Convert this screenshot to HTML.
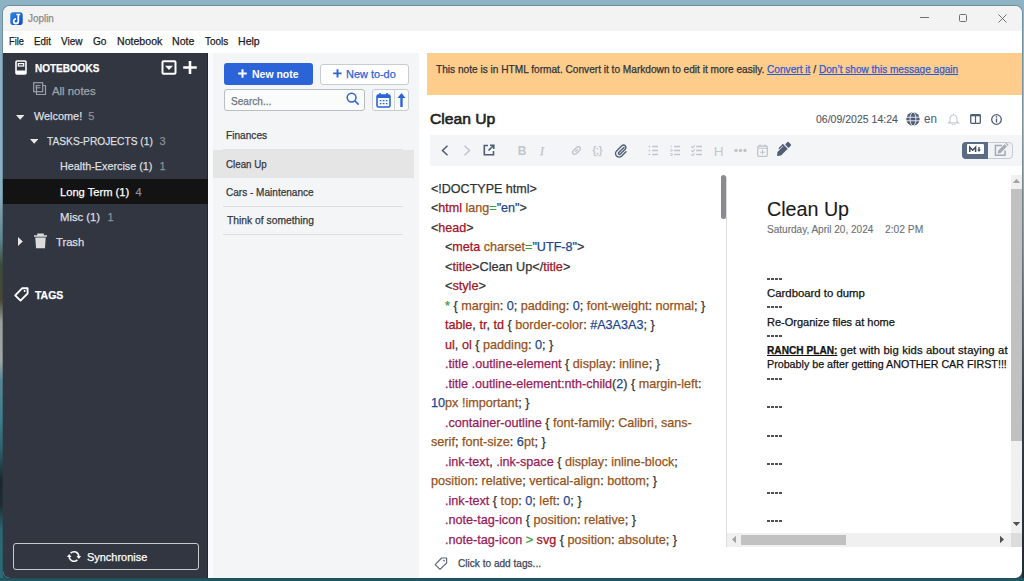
<!DOCTYPE html>
<html><head><meta charset="utf-8"><style>
html,body{margin:0;padding:0;width:1024px;height:581px;overflow:hidden;font-family:"Liberation Sans", sans-serif;}
body{position:relative;background:linear-gradient(#8db2c3 0px,#8db2c3 60px,#4a7080 300px,#1f5662 560px);}
.t{position:absolute;white-space:pre;line-height:1;-webkit-text-stroke:0.25px currentColor;}
</style></head><body>
<div style="position:absolute;left:0;top:0;width:3px;height:581px;background:linear-gradient(#8db2c3 0px,#89afc0 195px,#7c9dac 210px,#5f8a95 238px,#3e4a3a 265px,#4a4634 300px,#9c9e9c 322px,#a4a6a6 360px,#5a8696 380px,#3f7d8b 420px,#2f5f6c 450px,#1c262c 480px,#1f2c33 505px,#2c6874 530px,#2b6b76 581px)"></div>
<div style="position:absolute;right:0;top:0;width:2px;height:581px;background:linear-gradient(#8db2c3 0px,#a9b9c2 120px,#8a939a 250px,#3b3e40 400px,#1d2a30 581px)"></div>
<div style="position:absolute;left:0;bottom:0;width:1024px;height:3px;background:#1f5662"></div>
<div id="win" style="position:absolute;left:3px;top:6px;width:1019px;height:572px;border-radius:7px;overflow:hidden;background:#fff;box-shadow:0 0 0 1px rgba(40,60,70,0.3);">
<div style="position:absolute;left:-3px;top:-6px;width:1024px;height:581px;">
<div style="position:absolute;left:0px;top:0px;width:1024px;height:31px;background:#f3f3f3"></div><div style="position:absolute;left:0px;top:31px;width:1024px;height:22px;background:#ffffff"></div><svg style="position:absolute;left:9.5px;top:11.5px;" width="13" height="13.5" viewBox="0 0 13 13.5"><defs><linearGradient id="jg" x1="0" y1="0" x2="1" y2="1"><stop offset="0" stop-color="#2f86e6"/><stop offset="1" stop-color="#0a48c8"/></linearGradient></defs><rect x="0.3" y="0.3" width="12.4" height="12.8" rx="2.8" fill="url(#jg)"/><path d="M8.3 2.6 V9.2 A2.3 2.3 0 1 1 6 6.9" fill="none" stroke="#fff" stroke-width="1.8"/><path d="M6.4 2.5 H10.2" stroke="#fff" stroke-width="1.4"/></svg><div style="position:absolute;left:920px;top:17px;width:9px;height:1px;background:#707070"></div><div style="position:absolute;left:959px;top:14px;width:8px;height:8px;border:1px solid #707070;border-radius:1.5px;box-sizing:border-box"></div><svg style="position:absolute;left:998px;top:14px;" width="9" height="9" viewBox="0 0 9 9"><path d="M0.5 0.5 L8.5 8.5 M8.5 0.5 L0.5 8.5" stroke="#707070" stroke-width="1"/></svg><div style="position:absolute;left:0px;top:53px;width:208px;height:530px;background:#313640"></div><div style="position:absolute;left:208px;top:53px;width:5px;height:530px;background:#f9fafa"></div><div style="position:absolute;left:207px;top:53px;width:1px;height:530px;background:#23272e"></div><div style="position:absolute;left:0px;top:179px;width:208px;height:25px;background:#131313"></div><svg style="position:absolute;left:15px;top:60px;" width="12" height="16" viewBox="0 0 12 16"><rect x="1" y="1" width="10" height="13" rx="1" fill="none" stroke="#fff" stroke-width="1.6"/><rect x="3.3" y="3.6" width="5.4" height="2.4" fill="none" stroke="#fff" stroke-width="1.2"/><rect x="1" y="10.5" width="10" height="3.5" fill="#fff"/></svg><svg style="position:absolute;left:161px;top:60px;" width="16" height="15" viewBox="0 0 16 15"><rect x="1.5" y="1.2" width="13" height="12.6" rx="1" fill="none" stroke="#fff" stroke-width="2"/><path d="M4 5.8 L12 5.8 L8 10 Z" fill="#fff"/></svg><svg style="position:absolute;left:182px;top:60px;" width="16" height="15" viewBox="0 0 16 15"><path d="M8 1 V14 M1.2 7.5 H14.8" stroke="#fff" stroke-width="2.6"/></svg><svg style="position:absolute;left:33px;top:82px;" width="14" height="14" viewBox="0 0 14 14"><rect x="0.7" y="0.7" width="9" height="9" fill="none" stroke="#9aa0a8" stroke-width="1.2"/><path d="M3.5 3.5 V12.5 H12.5 V3.5 H9.7" fill="none" stroke="#9aa0a8" stroke-width="1.2"/><path d="M2.5 3.6 H7.5 M2.5 5.8 H7.5" stroke="#9aa0a8" stroke-width="1"/></svg><svg style="position:absolute;left:16px;top:114.6px;" width="8.4" height="5" viewBox="0 0 8.4 5"><path d="M0 0 H8.4 L4.2 4.8 Z" fill="#e8e8e8"/></svg><svg style="position:absolute;left:29.5px;top:139px;" width="8.4" height="5" viewBox="0 0 8.4 5"><path d="M0 0 H8.4 L4.2 4.8 Z" fill="#e8e8e8"/></svg><svg style="position:absolute;left:17.5px;top:237px;" width="5" height="9" viewBox="0 0 5 9"><path d="M0 0 V9 L4.8 4.5 Z" fill="#e8e8e8"/></svg><svg style="position:absolute;left:33px;top:233px;" width="15" height="16" viewBox="0 0 15 16"><path d="M1 3 H14 M5 3 V1.4 H10 V3" fill="none" stroke="#dcdcdc" stroke-width="1.6"/><path d="M2.3 4.5 H12.7 L12 15.2 H3 Z" fill="#dcdcdc"/></svg><svg style="position:absolute;left:14px;top:287px;" width="15" height="15" viewBox="0 0 15 15"><path d="M8.3 1.2 H13.6 V6.5 L6.5 13.6 L1.2 8.3 Z" fill="none" stroke="#fff" stroke-width="1.9" stroke-linejoin="round"/><circle cx="10.6" cy="4" r="1" fill="#fff"/></svg><div style="position:absolute;left:13px;top:543px;width:186px;height:27px;border:1px solid #c9cbce;border-radius:3px;box-sizing:border-box"></div><svg style="position:absolute;left:66px;top:549px;" width="16" height="15" viewBox="0 0 16 15"><g fill="none" stroke="#fff" stroke-width="1.5"><path d="M4.61 4.11 A4.8 4.8 0 0 1 12.8 7.4"/><path d="M11.39 10.89 A4.8 4.8 0 0 1 3.2 7.6"/></g><path d="M10.5 7 H15.1 L12.8 9.9 Z M0.9 8 H5.5 L3.2 5.1 Z" fill="#fff"/></svg><div style="position:absolute;left:213px;top:53px;width:206px;height:530px;background:#f4f5f6"></div><div style="position:absolute;left:419px;top:53px;width:8px;height:530px;background:#ffffff"></div><div style="position:absolute;left:224px;top:63px;width:89px;height:22px;background:#2b63d8;border-radius:3px"></div><svg style="position:absolute;left:237.8px;top:68.8px;" width="9" height="9" viewBox="0 0 9 9"><path d="M4.5 0.2 V8.8 M0.2 4.5 H8.8" stroke="#fff" stroke-width="2"/></svg><div style="position:absolute;left:319.5px;top:63.5px;width:89px;height:21.5px;background:#fff;border:1px solid #c8ccd0;border-radius:3px;box-sizing:border-box"></div><svg style="position:absolute;left:332.6px;top:69px;" width="9" height="9" viewBox="0 0 9 9"><path d="M4.5 0.2 V8.6 M0.2 4.4 H8.6" stroke="#2b63d8" stroke-width="1.9"/></svg><div style="position:absolute;left:223.5px;top:89.4px;width:141.5px;height:21.2px;background:#fafbfb;border:1px solid #b9bec4;border-radius:3px;box-sizing:border-box"></div><svg style="position:absolute;left:346px;top:92px;" width="14" height="14" viewBox="0 0 14 14"><circle cx="5.6" cy="5.6" r="4.4" fill="none" stroke="#2b63d8" stroke-width="1.5"/><path d="M8.8 8.8 L12.6 12.6" stroke="#2b63d8" stroke-width="1.6"/></svg><div style="position:absolute;left:372px;top:89.4px;width:37px;height:21.2px;background:#fafbfb;border:1px solid #c8ccd0;border-radius:3px;box-sizing:border-box"></div><div style="position:absolute;left:393.5px;top:90px;width:1px;height:20px;background:#d0d4d8"></div><svg style="position:absolute;left:376px;top:91.5px;" width="15" height="16" viewBox="0 0 15 16"><rect x="1" y="3" width="13" height="12" rx="1.5" fill="none" stroke="#2b63d8" stroke-width="1.6"/><rect x="1" y="3" width="13" height="3" fill="#2b63d8"/><path d="M4 1 V4 M11 1 V4" stroke="#2b63d8" stroke-width="1.6"/><path d="M3.8 8.6 h1.6 M6.8 8.6 h1.6 M9.8 8.6 h1.6 M3.8 11.6 h1.6 M6.8 11.6 h1.6 M9.8 11.6 h1.6" stroke="#2b63d8" stroke-width="1.4"/></svg><svg style="position:absolute;left:396.5px;top:91.5px;" width="9" height="16" viewBox="0 0 9 16"><path d="M4.5 1 L8.5 6 H5.7 V15 H3.3 V6 H0.5 Z" fill="#2b63d8"/></svg><div style="position:absolute;left:213px;top:150px;width:201px;height:28px;background:#e5e5e6"></div><div style="position:absolute;left:223px;top:149px;width:180px;height:1px;background:#e2e3e5"></div><div style="position:absolute;left:223px;top:206px;width:180px;height:1px;background:#dcdee0"></div><div style="position:absolute;left:223px;top:234px;width:180px;height:1px;background:#dcdee0"></div><div style="position:absolute;left:427px;top:53px;width:595px;height:41.5px;background:#fecc8b"></div><svg style="position:absolute;left:906.3px;top:111.5px;" width="14" height="14" viewBox="0 0 14 14"><circle cx="7" cy="7" r="6.7" fill="#4f5d75"/><g stroke="#fff" stroke-width="0.85" fill="none"><ellipse cx="7" cy="7" rx="2.9" ry="6.8"/><path d="M0 5.2 H14 M0 8.8 H14"/></g></svg><svg style="position:absolute;left:946.5px;top:112.5px;" width="13" height="12.5" viewBox="0 0 13 12.5"><path d="M6.5 2 C3.6 2 3 4.4 3 6.4 V8.4 L1.4 9.9 H11.6 L10 8.4 V6.4 C10 4.4 9.4 2 6.5 2 Z M5.2 10.9 A1.3 1.3 0 0 0 7.8 10.9 M6.5 0.6 V2" fill="none" stroke="#c5cad0" stroke-width="1.1"/></svg><svg style="position:absolute;left:969.5px;top:114px;" width="11" height="10" viewBox="0 0 11 10"><rect x="0.7" y="0.7" width="9.6" height="8.6" rx="0.8" fill="none" stroke="#4f5d75" stroke-width="1.3"/><path d="M5.5 1 V9" stroke="#4f5d75" stroke-width="1.2"/><rect x="0.7" y="0.7" width="9.6" height="1.6" fill="#4f5d75"/></svg><svg style="position:absolute;left:991px;top:113.5px;" width="11" height="11" viewBox="0 0 11 11"><circle cx="5.5" cy="5.5" r="4.8" fill="none" stroke="#4f5d75" stroke-width="1.3"/><path d="M5.5 4.6 V8.4" stroke="#4f5d75" stroke-width="1.4"/><circle cx="5.5" cy="2.9" r="0.8" fill="#4f5d75"/></svg><div style="position:absolute;left:430px;top:135px;width:592px;height:31px;background:#f4f5f7"></div><svg style="position:absolute;left:441px;top:145px;" width="8" height="11" viewBox="0 0 8 11"><path d="M6.5 0.8 L1.5 5.5 L6.5 10.2" fill="none" stroke="#4f5d75" stroke-width="1.5"/></svg><svg style="position:absolute;left:463px;top:145px;" width="8" height="11" viewBox="0 0 8 11"><path d="M1.5 0.8 L6.5 5.5 L1.5 10.2" fill="none" stroke="#bfc5cd" stroke-width="1.5"/></svg><svg style="position:absolute;left:483px;top:144px;" width="12" height="12" viewBox="0 0 12 12"><path d="M5 1.5 H1.3 V10.7 H10.5 V7" fill="none" stroke="#4f5d75" stroke-width="1.6"/><path d="M5.5 6.5 L10.5 1.5 M7 1.2 H10.8 V5" fill="none" stroke="#4f5d75" stroke-width="1.6"/></svg><svg style="position:absolute;left:570px;top:144px;" width="13" height="13" viewBox="0 0 13 13"><g fill="none" stroke="#bfc5cd" stroke-width="1.3"><path d="M5.6 4.4 L3.2 6.8 A2 2 0 0 0 6.2 9.8 L8.6 7.4"/><path d="M7.4 8.6 L9.8 6.2 A2 2 0 0 0 6.8 3.2 L4.4 5.6"/><path d="M5.2 7.8 L7.8 5.2"/></g></svg><svg style="position:absolute;left:614px;top:144px;" width="14" height="14" viewBox="0 0 14 14"><path d="M10 3.4 L4.6 8.8 A1.1 1.1 0 0 0 6.1 10.3 L11.2 5.2 A2.4 2.4 0 0 0 7.8 1.8 L2.6 7 A3.6 3.6 0 0 0 7.7 12.1 L12 7.8" fill="none" stroke="#4f5d75" stroke-width="1.4" stroke-linecap="round"/></svg><svg style="position:absolute;left:647.5px;top:145px;" width="11" height="11" viewBox="0 0 11 11"><path d="M4.2 1.5 H10 M4.2 5.5 H10 M4.2 9.5 H10" stroke="#bfc5cd" stroke-width="1.5"/><path d="M0.6 1.5 H2.2 M0.6 5.5 H2.2 M0.6 9.5 H2.2" stroke="#bfc5cd" stroke-width="1.3"/></svg><svg style="position:absolute;left:669.5px;top:145px;" width="11" height="11" viewBox="0 0 11 11"><path d="M4.2 1.5 H10 M4.2 5.5 H10 M4.2 9.5 H10" stroke="#bfc5cd" stroke-width="1.5"/><path d="M1.2 0.6 V2.4 M0.4 4.8 H2.2 V6.2 H0.6 M0.4 8.6 H2.2 V10.4 H0.4" fill="none" stroke="#bfc5cd" stroke-width="0.9"/></svg><svg style="position:absolute;left:690.5px;top:145px;" width="12" height="11" viewBox="0 0 12 11"><path d="M5.2 1.5 H11 M5.2 5.5 H11 M5.2 9.5 H11" stroke="#bfc5cd" stroke-width="1.5"/><path d="M0.4 1.4 L1.6 2.6 L3.8 0.4 M0.4 5.4 L1.6 6.6 L3.8 4.4 M0.4 9.4 L1.6 10.6 L3.8 8.4" fill="none" stroke="#bfc5cd" stroke-width="1.1"/></svg><svg style="position:absolute;left:733.5px;top:147.5px;" width="13" height="5" viewBox="0 0 13 5"><circle cx="2" cy="2.5" r="1.7" fill="#bfc5cd"/><circle cx="6.5" cy="2.5" r="1.7" fill="#bfc5cd"/><circle cx="11" cy="2.5" r="1.7" fill="#bfc5cd"/></svg><svg style="position:absolute;left:756.5px;top:144px;" width="11" height="13" viewBox="0 0 11 13"><rect x="0.7" y="2" width="9.6" height="10.3" rx="1.2" fill="none" stroke="#bfc5cd" stroke-width="1.3"/><path d="M0.7 4.3 H10.3" stroke="#bfc5cd" stroke-width="1.1"/><path d="M3 0.6 V2.6 M8 0.6 V2.6" stroke="#bfc5cd" stroke-width="1.2"/><path d="M5.5 5.8 V10.6 M3.1 8.2 H7.9" stroke="#bfc5cd" stroke-width="1.1"/></svg><svg style="position:absolute;left:774px;top:140px;" width="20" height="20" viewBox="0 0 20 20"><g transform="translate(3 16) rotate(-45)" fill="#4f5d75"><path d="M0 0 L3.2 -2.5 H12.6 V2.5 H3.2 Z"/><rect x="6.4" y="-4.4" width="6.2" height="1.3"/><rect x="11.3" y="-4.4" width="1.3" height="2.2"/><rect x="13.8" y="-2.5" width="4.2" height="5" rx="0.8"/></g></svg><div style="position:absolute;left:962.3px;top:141.6px;width:50.6px;height:17.2px;background:#f2f3f5;border:1px solid #c5cad1;border-radius:4px;box-sizing:border-box"></div><div style="position:absolute;left:962.3px;top:141.6px;width:25.7px;height:17.2px;background:#5b6b84;border-radius:4px 0 0 4px"></div><div style="position:absolute;left:967px;top:144.4px;width:16.6px;height:10.1px;background:#fff;border-radius:1px"></div><svg style="position:absolute;left:966px;top:144px;" width="20" height="12" viewBox="0 0 20 12"><path d="M3.8 8 V3.2 L6.7 6.2 L9.6 3.2 V8" fill="none" stroke="#3f4b5e" stroke-width="1.5" stroke-linejoin="miter"/><path d="M13 3 V6.6" stroke="#3f4b5e" stroke-width="1.3"/><path d="M11.1 5.6 H14.9 L13 8.1 Z" fill="#3f4b5e"/></svg><svg style="position:absolute;left:993.5px;top:142.5px;" width="15" height="14" viewBox="0 0 15 14"><path d="M8 2.6 H1.4 V12.2 H11 V7.4" fill="none" stroke="#a3abb6" stroke-width="1.5"/><path d="M3.6 10.6 L4.3 7.6 L10.6 1.3 L12.9 3.6 L6.6 9.9 Z" fill="#a3abb6"/><path d="M11.5 0.6 L12.3 -0.2 L14.6 2.1 L13.8 2.9 Z" fill="#a3abb6"/></svg><div style="position:absolute;left:720.6px;top:175px;width:5.4px;height:44px;background:#8a8b90;border-radius:3px"></div><div style="position:absolute;left:726px;top:176px;width:1px;height:371px;background:#dedede"></div><div style="position:absolute;left:767px;top:278px;width:15.2px;height:2px;background:repeating-linear-gradient(90deg,#505050 0 3.2px,transparent 3.2px 4px)"></div><div style="position:absolute;left:767px;top:306px;width:15.2px;height:2px;background:repeating-linear-gradient(90deg,#505050 0 3.2px,transparent 3.2px 4px)"></div><div style="position:absolute;left:767px;top:335px;width:15.2px;height:2px;background:repeating-linear-gradient(90deg,#505050 0 3.2px,transparent 3.2px 4px)"></div><div style="position:absolute;left:767px;top:378px;width:15.2px;height:2px;background:repeating-linear-gradient(90deg,#505050 0 3.2px,transparent 3.2px 4px)"></div><div style="position:absolute;left:767px;top:406px;width:15.2px;height:2px;background:repeating-linear-gradient(90deg,#505050 0 3.2px,transparent 3.2px 4px)"></div><div style="position:absolute;left:767px;top:435px;width:15.2px;height:2px;background:repeating-linear-gradient(90deg,#505050 0 3.2px,transparent 3.2px 4px)"></div><div style="position:absolute;left:767px;top:463px;width:15.2px;height:2px;background:repeating-linear-gradient(90deg,#505050 0 3.2px,transparent 3.2px 4px)"></div><div style="position:absolute;left:767px;top:492px;width:15.2px;height:2px;background:repeating-linear-gradient(90deg,#505050 0 3.2px,transparent 3.2px 4px)"></div><div style="position:absolute;left:767px;top:520px;width:15.2px;height:2px;background:repeating-linear-gradient(90deg,#505050 0 3.2px,transparent 3.2px 4px)"></div><div style="position:absolute;left:1010.6px;top:340px;width:0.01px;height:0.01px;"></div><svg style="position:absolute;left:433.5px;top:556.5px;" width="14" height="13" viewBox="0 0 14 13"><path d="M7.6 1 H12.6 V6 L6 12.4 L1.2 7.6 Z" fill="none" stroke="#5e6a7c" stroke-width="1.2" stroke-linejoin="round"/><circle cx="10" cy="3.6" r="0.9" fill="#5e6a7c"/></svg>
<div class="t" style="left:27.90px;top:14.00px;font-size:10px;font-weight:400;letter-spacing:0.000px;color:#8a8a8a;transform:scaleX(0.9905);transform-origin:0 0;"><span style="color:#8a8a8a;">Joplin</span></div><div class="t" style="left:8.80px;top:36.00px;font-size:10.7px;font-weight:400;letter-spacing:0.000px;color:#1b1b1b;transform:scaleX(0.8670);transform-origin:0 0;"><span style="color:#1b1b1b;">File</span></div><div class="t" style="left:33.80px;top:36.00px;font-size:10.7px;font-weight:400;letter-spacing:0.000px;color:#1b1b1b;transform:scaleX(0.9165);transform-origin:0 0;"><span style="color:#1b1b1b;">Edit</span></div><div class="t" style="left:61.40px;top:36.00px;font-size:10.7px;font-weight:400;letter-spacing:0.000px;color:#1b1b1b;transform:scaleX(0.9355);transform-origin:0 0;"><span style="color:#1b1b1b;">View</span></div><div class="t" style="left:93.30px;top:36.00px;font-size:10.7px;font-weight:400;letter-spacing:0.000px;color:#1b1b1b;transform:scaleX(0.9471);transform-origin:0 0;"><span style="color:#1b1b1b;">Go</span></div><div class="t" style="left:116.80px;top:36.00px;font-size:10.7px;font-weight:400;letter-spacing:0.000px;color:#1b1b1b;transform:scaleX(0.9909);transform-origin:0 0;"><span style="color:#1b1b1b;">Notebook</span></div><div class="t" style="left:172.20px;top:36.00px;font-size:10.7px;font-weight:400;letter-spacing:0.000px;color:#1b1b1b;transform:scaleX(0.9944);transform-origin:0 0;"><span style="color:#1b1b1b;">Note</span></div><div class="t" style="left:204.90px;top:36.00px;font-size:10.7px;font-weight:400;letter-spacing:0.000px;color:#1b1b1b;transform:scaleX(0.9296);transform-origin:0 0;"><span style="color:#1b1b1b;">Tools</span></div><div class="t" style="left:238.00px;top:36.00px;font-size:10.7px;font-weight:400;letter-spacing:0.000px;color:#1b1b1b;transform:scaleX(0.9892);transform-origin:0 0;"><span style="color:#1b1b1b;">Help</span></div><div class="t" style="left:35.10px;top:63.00px;font-size:11.2px;font-weight:700;letter-spacing:0.000px;color:#ffffff;transform:scaleX(0.8917);transform-origin:0 0;"><span style="color:#ffffff;">NOTEBOOKS</span></div><div class="t" style="left:52.30px;top:86.00px;font-size:11px;font-weight:400;letter-spacing:0.000px;color:#a0a4aa;transform:scaleX(1.0333);transform-origin:0 0;"><span style="color:#a0a4aa;">All notes</span></div><div class="t" style="left:33.70px;top:111.00px;font-size:11px;font-weight:400;letter-spacing:0.000px;color:#dedfe1;transform:scaleX(0.9891);transform-origin:0 0;"><span style="color:#dedfe1;">Welcome!</span></div><div class="t" style="left:88.20px;top:111.00px;font-size:11px;font-weight:400;letter-spacing:0.000px;color:#8b8f96;"><span style="color:#8b8f96;">5</span></div><div class="t" style="left:47.00px;top:136.00px;font-size:11px;font-weight:400;letter-spacing:0.000px;color:#dedfe1;transform:scaleX(0.9274);transform-origin:0 0;"><span style="color:#dedfe1;">TASKS-PROJECTS (1)</span></div><div class="t" style="left:159.40px;top:136.00px;font-size:11px;font-weight:400;letter-spacing:0.000px;color:#8b8f96;"><span style="color:#8b8f96;">3</span></div><div class="t" style="left:60.40px;top:161.00px;font-size:11px;font-weight:400;letter-spacing:0.000px;color:#dedfe1;transform:scaleX(0.9822);transform-origin:0 0;"><span style="color:#dedfe1;">Health-Exercise (1)</span></div><div class="t" style="left:159.40px;top:161.00px;font-size:11px;font-weight:400;letter-spacing:0.000px;color:#8b8f96;"><span style="color:#8b8f96;">1</span></div><div class="t" style="left:60.40px;top:187.00px;font-size:11px;font-weight:400;letter-spacing:0.000px;color:#ffffff;transform:scaleX(1.0133);transform-origin:0 0;"><span style="color:#ffffff;">Long Term (1)</span></div><div class="t" style="left:135.40px;top:187.00px;font-size:11px;font-weight:400;letter-spacing:0.000px;color:#8b8f96;"><span style="color:#8b8f96;">4</span></div><div class="t" style="left:60.40px;top:212.00px;font-size:11px;font-weight:400;letter-spacing:0.000px;color:#dedfe1;transform:scaleX(1.0254);transform-origin:0 0;"><span style="color:#dedfe1;">Misc (1)</span></div><div class="t" style="left:107.50px;top:212.00px;font-size:11px;font-weight:400;letter-spacing:0.000px;color:#8b8f96;"><span style="color:#8b8f96;">1</span></div><div class="t" style="left:56.00px;top:237.00px;font-size:11px;font-weight:400;letter-spacing:0.000px;color:#dedfe1;transform:scaleX(1.0172);transform-origin:0 0;"><span style="color:#dedfe1;">Trash</span></div><div class="t" style="left:35.20px;top:290.00px;font-size:10.7px;font-weight:700;letter-spacing:0.000px;color:#ffffff;transform:scaleX(0.9804);transform-origin:0 0;"><span style="color:#ffffff;">TAGS</span></div><div class="t" style="left:86.60px;top:551.00px;font-size:11.6px;font-weight:400;letter-spacing:0.000px;color:#ffffff;transform:scaleX(0.9446);transform-origin:0 0;"><span style="color:#ffffff;">Synchronise</span></div><div class="t" style="left:251.60px;top:69.00px;font-size:10.8px;font-weight:700;letter-spacing:0.000px;color:#ffffff;transform:scaleX(0.9695);transform-origin:0 0;-webkit-text-stroke:0.05px currentColor;"><span style="color:#ffffff;">New note</span></div><div class="t" style="left:346.00px;top:69.00px;font-size:10.8px;font-weight:400;letter-spacing:0.000px;color:#2b63d8;transform:scaleX(1.0113);transform-origin:0 0;"><span style="color:#2b63d8;">New to-do</span></div><div class="t" style="left:230.70px;top:96.00px;font-size:10.5px;font-weight:400;letter-spacing:0.000px;color:#6f757c;transform:scaleX(0.9614);transform-origin:0 0;"><span style="color:#6f757c;">Search...</span></div><div class="t" style="left:226.40px;top:130.00px;font-size:10.7px;font-weight:400;letter-spacing:0.000px;color:#33373c;transform:scaleX(0.9478);transform-origin:0 0;"><span style="color:#33373c;">Finances</span></div><div class="t" style="left:226.40px;top:159.00px;font-size:10.7px;font-weight:400;letter-spacing:0.000px;color:#33373c;transform:scaleX(0.9129);transform-origin:0 0;"><span style="color:#33373c;">Clean Up</span></div><div class="t" style="left:226.40px;top:187.00px;font-size:10.7px;font-weight:400;letter-spacing:0.000px;color:#33373c;transform:scaleX(0.9393);transform-origin:0 0;"><span style="color:#33373c;">Cars - Maintenance</span></div><div class="t" style="left:226.60px;top:215.00px;font-size:10.7px;font-weight:400;letter-spacing:0.000px;color:#33373c;transform:scaleX(0.9638);transform-origin:0 0;"><span style="color:#33373c;">Think of something</span></div><div class="t" style="left:436.00px;top:65.00px;font-size:10.4px;font-weight:400;letter-spacing:0.000px;color:#2f3338;transform:scaleX(0.9738);transform-origin:0 0;"><span style="color:#2f3338;">This note is in HTML format. Convert it to Markdown to edit it more easily.</span></div><div class="t" style="left:767.00px;top:65.00px;font-size:10.4px;font-weight:400;letter-spacing:0.000px;color:#2e5bd6;transform:scaleX(0.9762);transform-origin:0 0;text-decoration:underline;"><span style="color:#2e5bd6;">Convert it</span></div><div class="t" style="left:813.30px;top:65.00px;font-size:10.4px;font-weight:400;letter-spacing:0.000px;color:#2f3338;"><span style="color:#2f3338;">/</span></div><div class="t" style="left:819.00px;top:65.00px;font-size:10.4px;font-weight:400;letter-spacing:0.000px;color:#2e5bd6;transform:scaleX(0.9679);transform-origin:0 0;text-decoration:underline;"><span style="color:#2e5bd6;">Don’t show this message again</span></div><div class="t" style="left:430.20px;top:111.00px;font-size:15.2px;font-weight:400;letter-spacing:0.000px;color:#1d1f22;transform:scaleX(1.0304);transform-origin:0 0;-webkit-text-stroke:0.6px currentColor;"><span style="color:#1d1f22;">Clean Up</span></div><div class="t" style="left:816.00px;top:114.00px;font-size:10.8px;font-weight:400;letter-spacing:0.000px;color:#50565e;transform:scaleX(0.9736);transform-origin:0 0;-webkit-text-stroke:0.1px currentColor;"><span style="color:#50565e;">06/09/2025 14:24</span></div><div class="t" style="left:924.40px;top:112.00px;font-size:13.5px;font-weight:400;letter-spacing:0.000px;color:#4f5d75;transform:scaleX(0.8601);transform-origin:0 0;-webkit-text-stroke:0.05px currentColor;"><span style="color:#4f5d75;">en</span></div><div class="t" style="left:517.80px;top:145.00px;font-size:12px;font-weight:700;letter-spacing:0.000px;color:#bfc5cd;-webkit-text-stroke:0px;"><span style="color:#bfc5cd;">B</span></div><div class="t" style="left:540.00px;top:145.00px;font-size:12px;font-weight:400;letter-spacing:0.000px;color:#bfc5cd;font-style:italic;font-family:&quot;Liberation Serif&quot;;"><span style="color:#bfc5cd;">I</span></div><div class="t" style="left:592.50px;top:145.00px;font-size:11px;font-weight:400;letter-spacing:-0.300px;color:#bfc5cd;"><span style="color:#bfc5cd;">{;}</span></div><div class="t" style="left:713.80px;top:145.00px;font-size:13.5px;font-weight:400;letter-spacing:0.000px;color:#c3c8cf;-webkit-text-stroke:0px;"><span style="color:#c3c8cf;">H</span></div><div class="t" style="left:430.80px;top:182.00px;font-size:13px;font-weight:400;letter-spacing:0.000px;color:#303236;transform:scaleX(0.9635);transform-origin:0 0;"><span style="color:#303236;">&lt;!DOCTYPE html&gt;</span></div><div class="t" style="left:430.80px;top:201.00px;font-size:13px;font-weight:400;letter-spacing:0.000px;color:#303236;transform:scaleX(0.9663);transform-origin:0 0;"><span style="color:#303236;">&lt;</span><span style="color:#a3121f;">html</span><span style="color:#303236;"> </span><span style="color:#94521a;">lang</span><span style="color:#3d9a3d;">=</span><span style="color:#1b4690;">&quot;en&quot;</span><span style="color:#303236;">&gt;</span></div><div class="t" style="left:430.80px;top:221.00px;font-size:13px;font-weight:400;letter-spacing:0.000px;color:#303236;transform:scaleX(0.9659);transform-origin:0 0;"><span style="color:#303236;">&lt;</span><span style="color:#a3121f;">head</span><span style="color:#303236;">&gt;</span></div><div class="t" style="left:444.50px;top:240.00px;font-size:13px;font-weight:400;letter-spacing:0.000px;color:#303236;transform:scaleX(0.9673);transform-origin:0 0;"><span style="color:#303236;">&lt;</span><span style="color:#a3121f;">meta</span><span style="color:#303236;"> </span><span style="color:#94521a;">charset</span><span style="color:#3d9a3d;">=</span><span style="color:#1b4690;">&quot;UTF-8&quot;</span><span style="color:#303236;">&gt;</span></div><div class="t" style="left:444.50px;top:260.00px;font-size:13px;font-weight:400;letter-spacing:0.000px;color:#303236;transform:scaleX(0.9740);transform-origin:0 0;"><span style="color:#303236;">&lt;</span><span style="color:#a3121f;">title</span><span style="color:#303236;">&gt;Clean Up&lt;/</span><span style="color:#a3121f;">title</span><span style="color:#303236;">&gt;</span></div><div class="t" style="left:444.50px;top:279.00px;font-size:13px;font-weight:400;letter-spacing:0.000px;color:#303236;transform:scaleX(0.9760);transform-origin:0 0;"><span style="color:#303236;">&lt;</span><span style="color:#a3121f;">style</span><span style="color:#303236;">&gt;</span></div><div class="t" style="left:444.50px;top:299.00px;font-size:13px;font-weight:400;letter-spacing:0.000px;color:#303236;transform:scaleX(0.9705);transform-origin:0 0;"><span style="color:#3d9a3d;">*</span><span style="color:#303236;"> { </span><span style="color:#94521a;">margin</span><span style="color:#303236;">: </span><span style="color:#1b4690;">0</span><span style="color:#303236;">; </span><span style="color:#94521a;">padding</span><span style="color:#303236;">: </span><span style="color:#1b4690;">0</span><span style="color:#303236;">; </span><span style="color:#94521a;">font-weight</span><span style="color:#303236;">: </span><span style="color:#94521a;">normal</span><span style="color:#303236;">; }</span></div><div class="t" style="left:444.50px;top:318.00px;font-size:13px;font-weight:400;letter-spacing:0.000px;color:#303236;transform:scaleX(0.9701);transform-origin:0 0;"><span style="color:#a3121f;">table</span><span style="color:#303236;">, </span><span style="color:#a3121f;">tr</span><span style="color:#303236;">, </span><span style="color:#a3121f;">td</span><span style="color:#303236;"> { </span><span style="color:#94521a;">border-color</span><span style="color:#303236;">: </span><span style="color:#1b4690;">#A3A3A3</span><span style="color:#303236;">; }</span></div><div class="t" style="left:444.50px;top:338.00px;font-size:13px;font-weight:400;letter-spacing:0.000px;color:#303236;transform:scaleX(0.9724);transform-origin:0 0;"><span style="color:#a3121f;">ul</span><span style="color:#303236;">, </span><span style="color:#a3121f;">ol</span><span style="color:#303236;"> { </span><span style="color:#94521a;">padding</span><span style="color:#303236;">: </span><span style="color:#1b4690;">0</span><span style="color:#303236;">; }</span></div><div class="t" style="left:444.50px;top:357.00px;font-size:13px;font-weight:400;letter-spacing:0.000px;color:#303236;transform:scaleX(0.9717);transform-origin:0 0;"><span style="color:#961a5a;">.title .outline-element</span><span style="color:#303236;"> { </span><span style="color:#94521a;">display</span><span style="color:#303236;">: </span><span style="color:#94521a;">inline</span><span style="color:#303236;">; }</span></div><div class="t" style="left:444.50px;top:377.00px;font-size:13px;font-weight:400;letter-spacing:0.000px;color:#303236;transform:scaleX(0.9674);transform-origin:0 0;"><span style="color:#961a5a;">.title .outline-element:nth-child</span><span style="color:#303236;">(</span><span style="color:#1b4690;">2</span><span style="color:#303236;">)</span><span style="color:#303236;"> { </span><span style="color:#94521a;">margin-left</span><span style="color:#303236;">:</span></div><div class="t" style="left:430.80px;top:396.00px;font-size:13px;font-weight:400;letter-spacing:0.000px;color:#303236;transform:scaleX(0.9723);transform-origin:0 0;"><span style="color:#1b4690;">10</span><span style="color:#94521a;">px</span><span style="color:#303236;"> </span><span style="color:#94521a;">!important</span><span style="color:#303236;">; }</span></div><div class="t" style="left:444.50px;top:416.00px;font-size:13px;font-weight:400;letter-spacing:0.000px;color:#303236;transform:scaleX(0.9699);transform-origin:0 0;"><span style="color:#961a5a;">.container-outline</span><span style="color:#303236;"> { </span><span style="color:#94521a;">font-family</span><span style="color:#303236;">: </span><span style="color:#94521a;">Calibri, sans-</span></div><div class="t" style="left:430.80px;top:435.00px;font-size:13px;font-weight:400;letter-spacing:0.000px;color:#303236;transform:scaleX(0.9736);transform-origin:0 0;"><span style="color:#94521a;">serif</span><span style="color:#303236;">; </span><span style="color:#94521a;">font-size</span><span style="color:#303236;">: </span><span style="color:#1b4690;">6</span><span style="color:#94521a;">pt</span><span style="color:#303236;">; }</span></div><div class="t" style="left:444.50px;top:455.00px;font-size:13px;font-weight:400;letter-spacing:0.000px;color:#303236;transform:scaleX(0.9702);transform-origin:0 0;"><span style="color:#961a5a;">.ink-text</span><span style="color:#303236;">, </span><span style="color:#961a5a;">.ink-space</span><span style="color:#303236;"> { </span><span style="color:#94521a;">display</span><span style="color:#303236;">: </span><span style="color:#94521a;">inline-block</span><span style="color:#303236;">;</span></div><div class="t" style="left:430.80px;top:474.00px;font-size:13px;font-weight:400;letter-spacing:0.000px;color:#303236;transform:scaleX(0.9710);transform-origin:0 0;"><span style="color:#94521a;">position</span><span style="color:#303236;">: </span><span style="color:#94521a;">relative</span><span style="color:#303236;">; </span><span style="color:#94521a;">vertical-align</span><span style="color:#303236;">: </span><span style="color:#94521a;">bottom</span><span style="color:#303236;">; }</span></div><div class="t" style="left:444.50px;top:494.00px;font-size:13px;font-weight:400;letter-spacing:0.000px;color:#303236;transform:scaleX(0.9740);transform-origin:0 0;"><span style="color:#961a5a;">.ink-text</span><span style="color:#303236;"> { </span><span style="color:#94521a;">top</span><span style="color:#303236;">: </span><span style="color:#1b4690;">0</span><span style="color:#303236;">; </span><span style="color:#94521a;">left</span><span style="color:#303236;">: </span><span style="color:#1b4690;">0</span><span style="color:#303236;">; }</span></div><div class="t" style="left:444.50px;top:513.00px;font-size:13px;font-weight:400;letter-spacing:0.000px;color:#303236;transform:scaleX(0.9714);transform-origin:0 0;"><span style="color:#961a5a;">.note-tag-icon</span><span style="color:#303236;"> { </span><span style="color:#94521a;">position</span><span style="color:#303236;">: </span><span style="color:#94521a;">relative</span><span style="color:#303236;">; }</span></div><div class="t" style="left:444.50px;top:533.00px;font-size:13px;font-weight:400;letter-spacing:0.000px;color:#303236;transform:scaleX(0.9710);transform-origin:0 0;"><span style="color:#961a5a;">.note-tag-icon</span><span style="color:#303236;"> </span><span style="color:#3d9a3d;">&gt;</span><span style="color:#303236;"> </span><span style="color:#a3121f;">svg</span><span style="color:#303236;"> { </span><span style="color:#94521a;">position</span><span style="color:#303236;">: </span><span style="color:#94521a;">absolute</span><span style="color:#303236;">; }</span></div><div class="t" style="left:767.20px;top:200.00px;font-size:19.3px;font-weight:400;letter-spacing:0.000px;color:#1a1a1a;transform:scaleX(1.0210);transform-origin:0 0;-webkit-text-stroke:0.1px currentColor;"><span style="color:#1a1a1a;">Clean Up</span></div><div class="t" style="left:767.20px;top:225.00px;font-size:10px;font-weight:400;letter-spacing:0.000px;color:#6b6f74;transform:scaleX(1.0029);transform-origin:0 0;-webkit-text-stroke:0.1px currentColor;"><span style="color:#6b6f74;">Saturday, April 20, 2024</span></div><div class="t" style="left:885.00px;top:225.00px;font-size:10px;font-weight:400;letter-spacing:0.000px;color:#6b6f74;transform:scaleX(1.0261);transform-origin:0 0;-webkit-text-stroke:0.1px currentColor;"><span style="color:#6b6f74;">2:02 PM</span></div><div class="t" style="left:767.20px;top:288.00px;font-size:11.3px;font-weight:400;letter-spacing:0.000px;color:#111111;transform:scaleX(1.0058);transform-origin:0 0;"><span style="color:#111111;">Cardboard to dump</span></div><div class="t" style="left:767.20px;top:317.00px;font-size:11.3px;font-weight:400;letter-spacing:0.000px;color:#111111;transform:scaleX(0.9744);transform-origin:0 0;"><span style="color:#111111;">Re-Organize files at home</span></div><div class="t" style="left:767.20px;top:345.00px;font-size:11.3px;font-weight:700;letter-spacing:0.000px;color:#111111;transform:scaleX(0.8975);transform-origin:0 0;text-decoration:underline;"><span style="color:#111111;">RANCH PLAN:</span></div><div class="t" style="left:840.30px;top:345.00px;font-size:11.3px;font-weight:400;letter-spacing:0.120px;color:#111111;"><span style="color:#111111;">get with big kids about staying at ranch</span></div><div class="t" style="left:767.20px;top:359.00px;font-size:11.3px;font-weight:400;letter-spacing:0.000px;color:#111111;transform:scaleX(0.9479);transform-origin:0 0;"><span style="color:#111111;">Probably be after getting ANOTHER CAR FIRST!!!</span></div><div class="t" style="left:458.20px;top:558.00px;font-size:10.8px;font-weight:400;letter-spacing:0.000px;color:#3b4452;transform:scaleX(0.9345);transform-origin:0 0;"><span style="color:#3b4452;">Click to add tags...</span></div>
<div style="position:absolute;left:1010.6px;top:175px;width:11.4px;height:358px;background:#f0f0f0"></div><div style="position:absolute;left:1010.6px;top:189.2px;width:11.4px;height:252.2px;background:#c1c1c1"></div><svg style="position:absolute;left:1012px;top:178px;" width="9" height="6" viewBox="0 0 9 6"><path d="M0.8 5 L4.5 1 L8.2 5 Z" fill="#a3a3a3"/></svg><svg style="position:absolute;left:1012px;top:521px;" width="9" height="6" viewBox="0 0 9 6"><path d="M0.8 1 L4.5 5 L8.2 1 Z" fill="#505050"/></svg><div style="position:absolute;left:727px;top:533px;width:295px;height:13.5px;background:#f0f0f0"></div><div style="position:absolute;left:1010.6px;top:533px;width:11.4px;height:13.5px;background:#dcdcdc"></div><div style="position:absolute;left:740.8px;top:534.5px;width:105.4px;height:10.5px;background:#c1c1c1"></div><svg style="position:absolute;left:731px;top:535px;" width="6" height="9" viewBox="0 0 6 9"><path d="M5 0.8 L1 4.5 L5 8.2 Z" fill="#a3a3a3"/></svg><svg style="position:absolute;left:999px;top:535px;" width="6" height="9" viewBox="0 0 6 9"><path d="M1 0.8 L5 4.5 L1 8.2 Z" fill="#505050"/></svg>
</div></div>
</body></html>
